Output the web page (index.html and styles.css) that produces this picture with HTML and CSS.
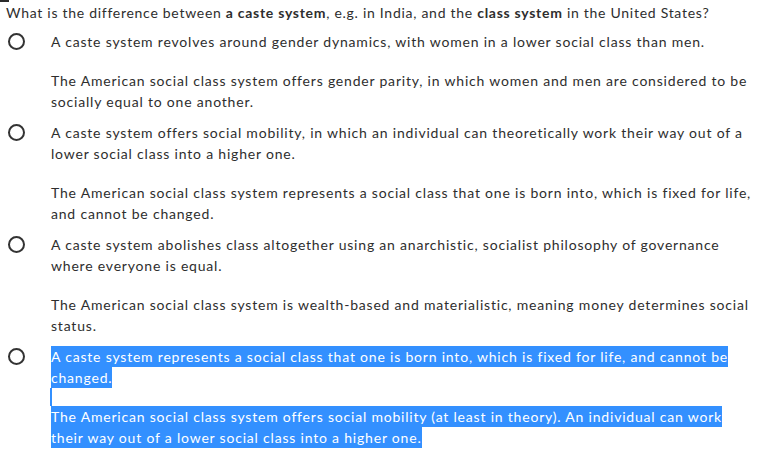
FILE: index.html
```html
<!DOCTYPE html>
<html lang="en">
<head>
    <meta charset="UTF-8">
    <meta name="viewport" content="width=device-width, initial-scale=1.0">
    <title>Quiz Question</title>
    <link rel="stylesheet" href="styles.css">
</head>
<body>
    <div class="corner-mark"></div>
    <p class="question">What is the difference between <strong>a caste system</strong>, e.g. in India, and the <strong>class system</strong> in the United States?</p>

    <ul class="options">
        <li class="option">
            <span class="radio"></span>
            <div class="answer">
                <p>A caste system revolves around gender dynamics, with women in a lower social class than men.</p>
                <p>The American social class system offers gender parity, in which women and men are considered to be socially equal to one another.</p>
            </div>
        </li>
        <li class="option">
            <span class="radio"></span>
            <div class="answer">
                <p>A caste system offers social mobility, in which an individual can theoretically work their way out of a lower social class into a higher one.</p>
                <p>The American social class system represents a social class that one is born into, which is fixed for life, and cannot be changed.</p>
            </div>
        </li>
        <li class="option">
            <span class="radio"></span>
            <div class="answer">
                <p>A caste system abolishes class altogether using an anarchistic, socialist philosophy of governance where everyone is equal.</p>
                <p>The American social class system is wealth-based and materialistic, meaning money determines social status.</p>
            </div>
        </li>
        <li class="option">
            <span class="radio"></span>
            <div class="answer">
                <p><span class="hl">A caste system represents a social class that one is born into, which is fixed for life, and cannot be changed.</span></p>
                <div class="sel-break"></div>
                <p><span class="hl">The American social class system offers social mobility (at least in theory). An individual can work their way out of a lower social class into a higher one.</span></p>
            </div>
        </li>
    </ul>
</body>
</html>
```

FILE: styles.css
```css
body {
    font-family: Lato, "Open Sans", sans-serif;
    font-size: 14px;
    line-height: 21px;
    letter-spacing: 0.8px;
    color: #2e2e2e;
    margin: 0;
    padding: 0 6px 0 0;
    background: #fff;
}
.corner-mark {
    width: 9px;
    height: 2px;
    background-color: #2b2b2b;
}
.question {
    margin: 0 0 8px 0;
    padding-left: 6px;
    letter-spacing: 0.72px;
}
.question strong {
    font-weight: 700;
}
.options {
    list-style: none;
    margin: 0;
    padding: 0;
    display: flex;
    flex-direction: column;
    gap: 10px;
}
.option {
    display: flex;
    align-items: flex-start;
}
.radio {
    flex: none;
    width: 17px;
    height: 17px;
    box-sizing: border-box;
    border: 2px solid #333;
    border-radius: 50%;
    margin: 2px 0 0 8px;
}
.answer {
    flex: 1;
    margin-left: 26px;
}
.answer p {
    margin: 0;
}
.answer p + p {
    margin-top: 18px;
}
/* selected text in the last answer */
.hl {
    background-color: #3390ff;
    color: #fff;
    padding: 2px 0;
}
.sel-break {
    width: 2px;
    height: 18px;
    margin-left: -1px;
    background-color: #3390ff;
}
```
